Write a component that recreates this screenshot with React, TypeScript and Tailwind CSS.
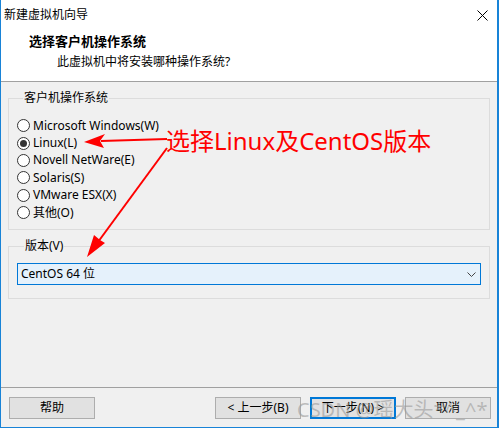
const osOptions = [
  { label: 'Microsoft Windows(W)', checked: false },
  { label: 'Linux(L)', checked: true },
  { label: 'Novell NetWare(E)', checked: false },
  { label: 'Solaris(S)', checked: false },
  { label: 'VMware ESX(X)', checked: false },
  { label: '其他(O)', checked: false },
]

function Radio({ label, checked }: { label: string; checked: boolean }) {
  return (
    <div className="flex items-center h-[17.4px]">
      <span className="w-[13px] h-[13px] rounded-full border border-[#333333] bg-white flex items-center justify-center">
        {checked && <span className="w-[7px] h-[7px] rounded-full bg-[#333333]" />}
      </span>
      <span className="ml-[3px] text-[12px] leading-[16px] text-black">{label}</span>
    </div>
  )
}

function WizardButton({ label, primary = false }: { label: string; primary?: boolean }) {
  return (
    <button
      className={
        primary
          ? 'w-[86px] h-[22px] bg-[#e1e1e1] border-2 border-[#0078d7] text-[12px] leading-[16px] text-black'
          : 'w-[86px] h-[22px] bg-[#e1e1e1] border border-[#adadad] text-[12px] leading-[16px] text-black'
      }
    >
      {label}
    </button>
  )
}

export default function App() {
  return (
    <div
      className="relative w-[499px] h-[428px] flex flex-col bg-[#f0f0f0] border-l border-r-2 border-b border-[#1883d7] overflow-hidden"
      style={{ fontFamily: '"Noto Sans", "Noto Sans CJK SC", sans-serif' }}
    >
      {/* title bar */}
      <div className="h-[30px] bg-white flex items-center justify-between pl-[3px] pr-[9px]">
        <span className="text-[12px] leading-[16px] text-black">新建虚拟机向导</span>
        <svg width="11" height="11" viewBox="0 0 11 11">
          <path d="M0.5 0.5 L10.5 10.5 M10.5 0.5 L0.5 10.5" stroke="#000" strokeWidth="1" />
        </svg>
      </div>

      {/* header */}
      <div className="h-[52px] bg-white border-b border-[#a0a0a0] pl-[28px] pt-[2px]">
        <div className="text-[13px] leading-[18px] font-bold text-black">选择客户机操作系统</div>
        <div className="mt-[3px] pl-[28px] text-[12px] leading-[18px] text-black">此虚拟机中将安装哪种操作系统?</div>
      </div>

      {/* body */}
      <div className="flex-1 flex flex-col px-[7px]">
        <fieldset className="mt-[8px] h-[140px] border border-[#dcdcdc] px-[8px] pt-[11px]">
          <legend className="ml-[6px] px-[1px] text-[12px] leading-[16px] text-black">客户机操作系统</legend>
          {osOptions.map((o) => (
            <Radio key={o.label} label={o.label} checked={o.checked} />
          ))}
        </fieldset>

        <fieldset className="mt-[8px] h-[61px] border border-[#dcdcdc] px-[8px] pt-[9px]">
          <legend className="ml-[7px] px-[1px] text-[12px] leading-[16px] text-black">版本(V)</legend>
          <div className="h-[22px] bg-[#e5f1fb] border border-[#0078d7] flex items-center justify-between pl-[3px] pr-[4px]">
            <span className="text-[12px] leading-[16px] text-black">CentOS 64 位</span>
            <svg width="9" height="5" viewBox="0 0 9 5">
              <path d="M0.5 0.5 L4.5 4.5 L8.5 0.5" stroke="#444" strokeWidth="1" fill="none" />
            </svg>
          </div>
        </fieldset>
      </div>

      {/* footer */}
      <div className="h-[40px] border-t border-[#a0a0a0] pt-[9px] pl-[8px] pr-[6px] flex items-start">
        <WizardButton label="帮助" />
        <div className="ml-auto flex gap-[9px]">
          <WizardButton label="< 上一步(B)" />
          <WizardButton label="下一步(N) >" primary />
          <WizardButton label="取消" />
        </div>
      </div>

      {/* red annotation */}
      <svg className="absolute left-0 top-0 pointer-events-none" width="499" height="428">
        <path d="M100 141 L166 139" stroke="#ff0000" strokeWidth="2" />
        <polygon points="83,142 104,134 99,141 103,148" fill="#ff0000" />
        <path d="M166 148 L97 242" stroke="#ff0000" strokeWidth="2" />
        <polygon points="86,257 93,235 99,240 104,243" fill="#ff0000" />
      </svg>
      <div className="absolute left-[165px] top-[127px] text-[24px] leading-[28px] text-[#ff0000] pointer-events-none">
        选择Linux及CentOS版本
      </div>

      {/* watermark */}
      <div className="absolute left-[296px] top-[398px] text-[20px] leading-[24px] text-[#9a9a9a]/60 pointer-events-none">
        CSDN @瑶大头*^_^*
      </div>
    </div>
  )
}
